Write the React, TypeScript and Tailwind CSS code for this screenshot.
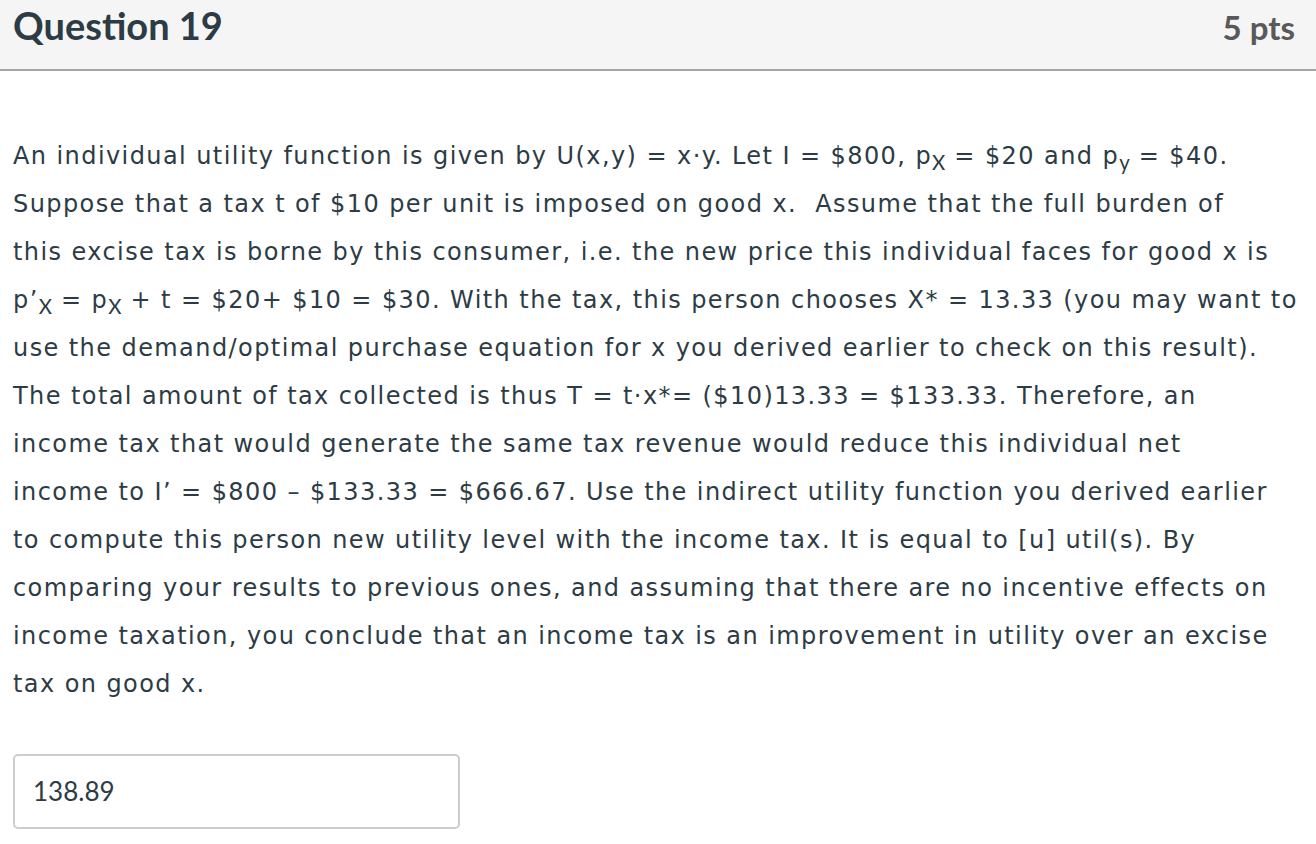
const bodyFont = { fontFamily: "'DejaVu Sans', 'Liberation Sans', sans-serif" };

function Sub({ children }: { children: React.ReactNode }) {
  return <sub className="relative top-[0.3em] align-baseline font-['Lato',sans-serif] text-[0.85em] leading-none tracking-normal">{children}</sub>;
}

const lines: React.ReactNode[] = [
  <>An individual utility function is given by U(x,y) = x·y. Let I = $800, p<Sub>X</Sub> = $20 and p<Sub>y</Sub> = $40.</>,
  <>Suppose that a tax t of $10 per unit is imposed on good x.&nbsp; Assume that the full burden of</>,
  <>this excise tax is borne by this consumer, i.e. the new price this individual faces for good x is</>,
  <>p’<Sub>X</Sub> = p<Sub>X</Sub> + t = $20+ $10 = $30. With the tax, this person chooses X* = 13.33 (you may want to</>,
  <>use the demand/optimal purchase equation for x you derived earlier to check on this result).</>,
  <>The total amount of tax collected is thus T = t·x*= ($10)13.33 = $133.33. Therefore, an</>,
  <>income tax that would generate the same tax revenue would reduce this individual net</>,
  <>income to I’ = $800 – $133.33 = $666.67. Use the indirect utility function you derived earlier</>,
  <>to compute this person new utility level with the income tax. It is equal to [u] util(s). By</>,
  <>comparing your results to previous ones, and assuming that there are no incentive effects on</>,
  <>income taxation, you conclude that an income tax is an improvement in utility over an excise</>,
  <>tax on good x.</>,
];

export default function App() {
  return (
    <div className="min-h-[844px] w-[1316px] bg-white text-[#2d3b45]">
      <div className="flex h-[71px] items-start justify-between border-b-2 border-[#a5a5a5] bg-[#f5f5f5] px-[13px] pt-[2px] font-['Lato',sans-serif]">
        <h2 className="text-[38px] font-bold leading-[46px] text-[#2d3b45]">Question 19</h2>
        <div className="pr-[8px] text-[33px] font-bold leading-[50px] text-[#595959]">5 pts</div>
      </div>
      <div className="px-[13px] pt-[61px]">
        <div className="text-[24px] leading-[48px] tracking-[1.42px]" style={bodyFont}>
          {lines.map((line, i) => (
            <div key={i} className="whitespace-nowrap">
              {line}
            </div>
          ))}
        </div>
        <div className="mt-[46px] flex h-[75px] w-[447px] items-center rounded-[5px] border-2 border-[#cdcdcd] px-[18px] font-['Lato',sans-serif] text-[26px] text-[#2d3b45]">
          138.89
        </div>
      </div>
    </div>
  );
}
